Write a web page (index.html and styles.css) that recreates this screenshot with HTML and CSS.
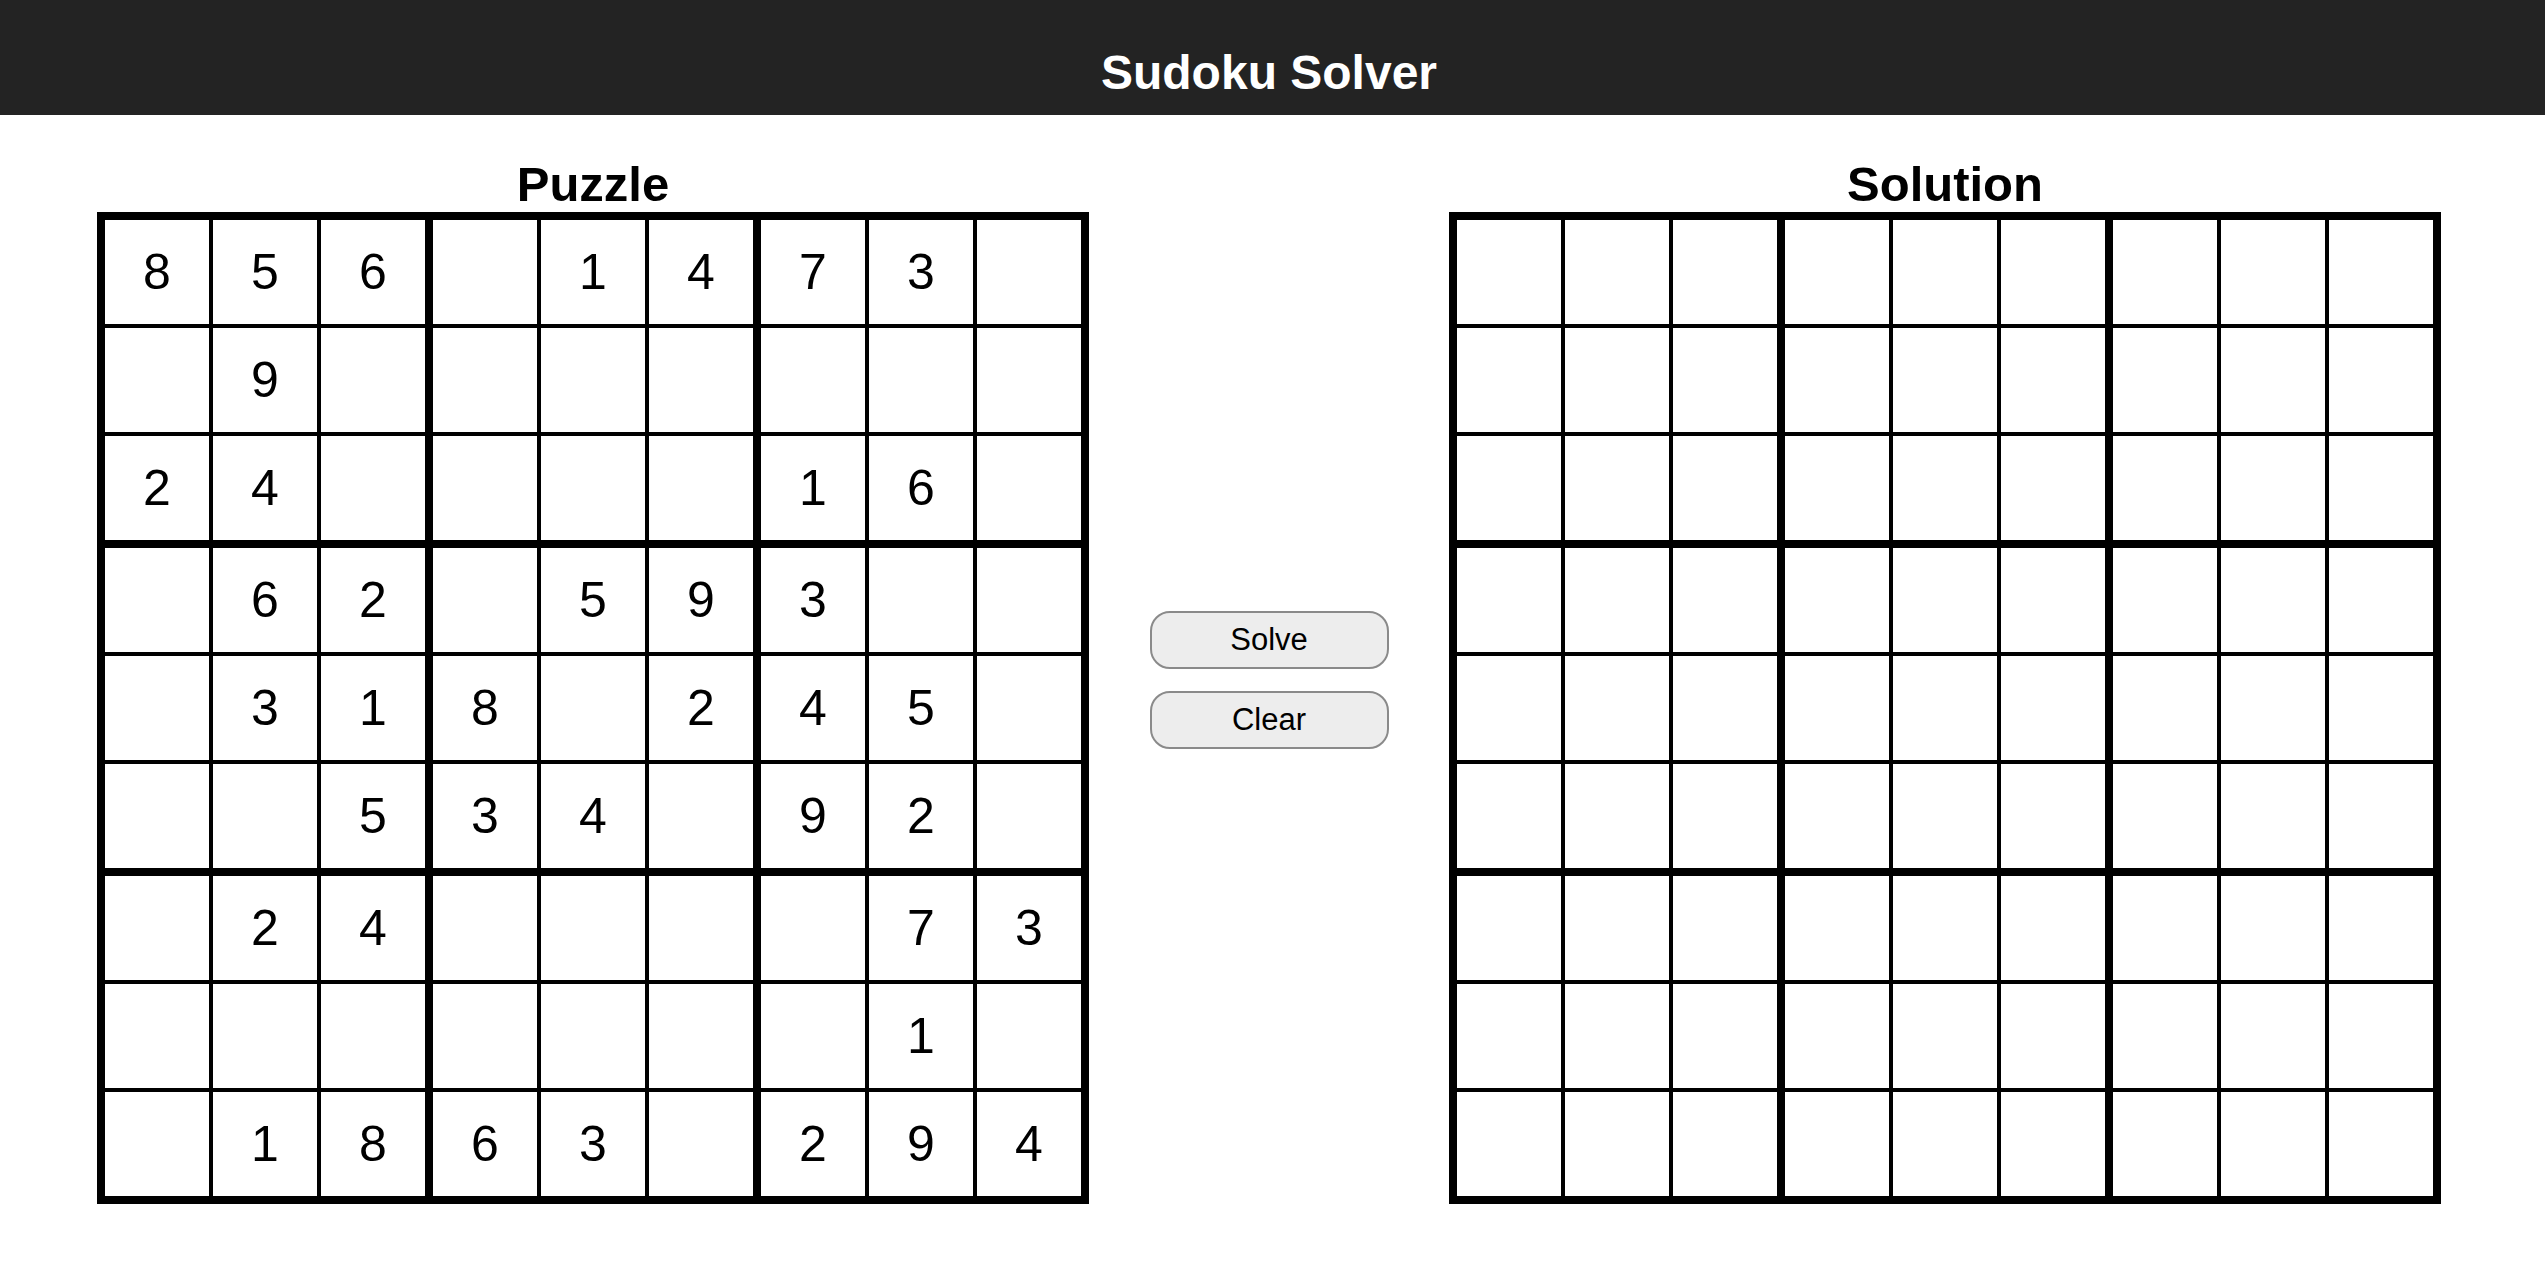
FILE: index.html
```html
<!DOCTYPE html>
<html>
<head>
<meta charset="utf-8">
<title>Sudoku Solver</title>
<link rel="stylesheet" href="styles.css">
</head>
<body>
<header class="topbar"><h1 class="title">Sudoku Solver</h1></header>
<main class="layout">
  <section class="panel">
    <h2 class="panel-title">Puzzle</h2>
    <div class="board">
      <div class="box"><div class="cell">8</div><div class="cell">5</div><div class="cell">6</div><div class="cell"></div><div class="cell">9</div><div class="cell"></div><div class="cell">2</div><div class="cell">4</div><div class="cell"></div></div>
      <div class="box"><div class="cell"></div><div class="cell">1</div><div class="cell">4</div><div class="cell"></div><div class="cell"></div><div class="cell"></div><div class="cell"></div><div class="cell"></div><div class="cell"></div></div>
      <div class="box"><div class="cell">7</div><div class="cell">3</div><div class="cell"></div><div class="cell"></div><div class="cell"></div><div class="cell"></div><div class="cell">1</div><div class="cell">6</div><div class="cell"></div></div>
      <div class="box"><div class="cell"></div><div class="cell">6</div><div class="cell">2</div><div class="cell"></div><div class="cell">3</div><div class="cell">1</div><div class="cell"></div><div class="cell"></div><div class="cell">5</div></div>
      <div class="box"><div class="cell"></div><div class="cell">5</div><div class="cell">9</div><div class="cell">8</div><div class="cell"></div><div class="cell">2</div><div class="cell">3</div><div class="cell">4</div><div class="cell"></div></div>
      <div class="box"><div class="cell">3</div><div class="cell"></div><div class="cell"></div><div class="cell">4</div><div class="cell">5</div><div class="cell"></div><div class="cell">9</div><div class="cell">2</div><div class="cell"></div></div>
      <div class="box"><div class="cell"></div><div class="cell">2</div><div class="cell">4</div><div class="cell"></div><div class="cell"></div><div class="cell"></div><div class="cell"></div><div class="cell">1</div><div class="cell">8</div></div>
      <div class="box"><div class="cell"></div><div class="cell"></div><div class="cell"></div><div class="cell"></div><div class="cell"></div><div class="cell"></div><div class="cell">6</div><div class="cell">3</div><div class="cell"></div></div>
      <div class="box"><div class="cell"></div><div class="cell">7</div><div class="cell">3</div><div class="cell"></div><div class="cell">1</div><div class="cell"></div><div class="cell">2</div><div class="cell">9</div><div class="cell">4</div></div>
    </div>
  </section>
  <div class="controls">
    <button class="btn" type="button">Solve</button>
    <button class="btn" type="button">Clear</button>
  </div>
  <section class="panel">
    <h2 class="panel-title">Solution</h2>
    <div class="board">
      <div class="box"><div class="cell"></div><div class="cell"></div><div class="cell"></div><div class="cell"></div><div class="cell"></div><div class="cell"></div><div class="cell"></div><div class="cell"></div><div class="cell"></div></div>
      <div class="box"><div class="cell"></div><div class="cell"></div><div class="cell"></div><div class="cell"></div><div class="cell"></div><div class="cell"></div><div class="cell"></div><div class="cell"></div><div class="cell"></div></div>
      <div class="box"><div class="cell"></div><div class="cell"></div><div class="cell"></div><div class="cell"></div><div class="cell"></div><div class="cell"></div><div class="cell"></div><div class="cell"></div><div class="cell"></div></div>
      <div class="box"><div class="cell"></div><div class="cell"></div><div class="cell"></div><div class="cell"></div><div class="cell"></div><div class="cell"></div><div class="cell"></div><div class="cell"></div><div class="cell"></div></div>
      <div class="box"><div class="cell"></div><div class="cell"></div><div class="cell"></div><div class="cell"></div><div class="cell"></div><div class="cell"></div><div class="cell"></div><div class="cell"></div><div class="cell"></div></div>
      <div class="box"><div class="cell"></div><div class="cell"></div><div class="cell"></div><div class="cell"></div><div class="cell"></div><div class="cell"></div><div class="cell"></div><div class="cell"></div><div class="cell"></div></div>
      <div class="box"><div class="cell"></div><div class="cell"></div><div class="cell"></div><div class="cell"></div><div class="cell"></div><div class="cell"></div><div class="cell"></div><div class="cell"></div><div class="cell"></div></div>
      <div class="box"><div class="cell"></div><div class="cell"></div><div class="cell"></div><div class="cell"></div><div class="cell"></div><div class="cell"></div><div class="cell"></div><div class="cell"></div><div class="cell"></div></div>
      <div class="box"><div class="cell"></div><div class="cell"></div><div class="cell"></div><div class="cell"></div><div class="cell"></div><div class="cell"></div><div class="cell"></div><div class="cell"></div><div class="cell"></div></div>
    </div>
  </section>
</main>
</body>
</html>
```
FILE: styles.css
```css
html, body {
  margin: 0;
  padding: 0;
  background: #ffffff;
  font-family: "Liberation Sans", Arial, Helvetica, sans-serif;
  color: #000000;
}

.topbar {
  background: #232323;
  height: 115px;
  box-sizing: border-box;
  padding: 45px 7px 0 0;
}

.title {
  margin: 0;
  color: #ffffff;
  font-size: 48px;
  font-weight: bold;
  line-height: 56px;
  text-align: center;
}

.layout {
  display: flex;
  align-items: stretch;
  padding: 41px 0 0 97px;
}

.panel {
  display: flex;
  flex-direction: column;
  width: 992px;
}

.panel-title {
  margin: 0;
  font-size: 49px;
  font-weight: bold;
  line-height: 56px;
  text-align: center;
}

.board {
  display: grid;
  grid-template-columns: repeat(3, 320px);
  grid-template-rows: repeat(3, 320px);
  gap: 8px;
  padding: 8px;
  background: #000000;
  width: 992px;
  box-sizing: border-box;
}

.box {
  display: grid;
  grid-template-columns: repeat(3, 104px);
  grid-template-rows: repeat(3, 104px);
  gap: 4px;
  background: #000000;
}

.cell {
  background: #ffffff;
  display: flex;
  align-items: center;
  justify-content: center;
  font-size: 50px;
  color: #000000;
}

.controls {
  width: 360px;
  display: flex;
  flex-direction: column;
  align-items: center;
  justify-content: center;
  gap: 22px;
}

.btn {
  width: 239px;
  height: 58px;
  box-sizing: border-box;
  border: 2px solid #8a8a8a;
  border-radius: 20px;
  background: #ededed;
  font-family: "Liberation Sans", Arial, Helvetica, sans-serif;
  font-size: 31px;
  color: #000000;
  padding: 0;
}
```
